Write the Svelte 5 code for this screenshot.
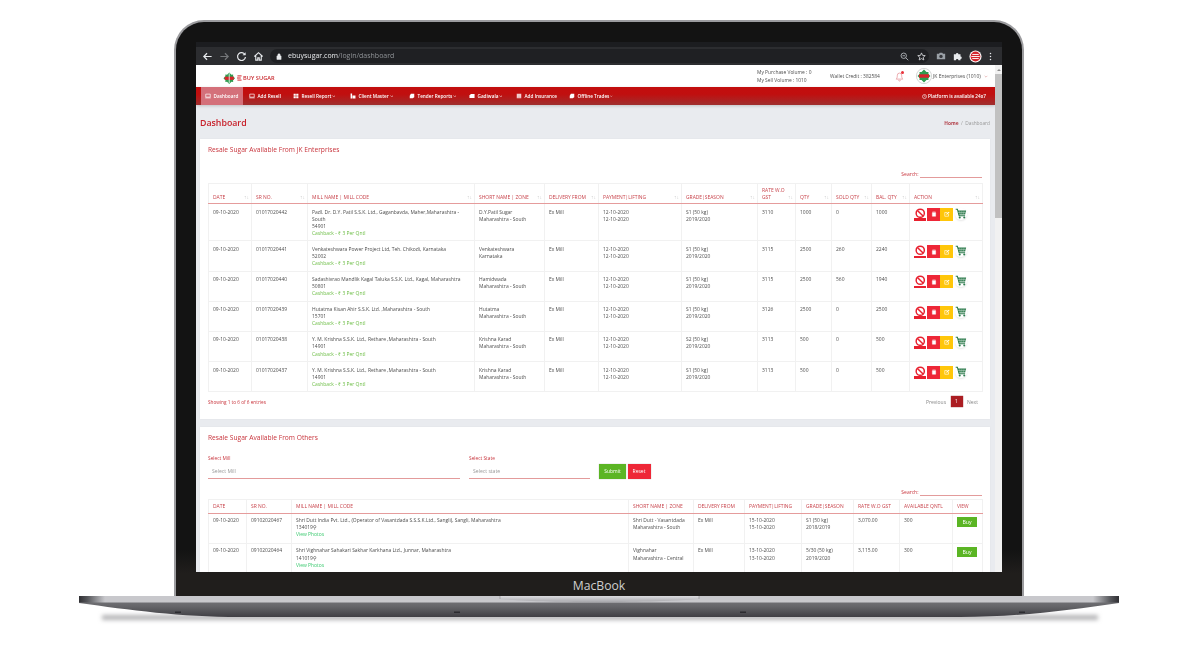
<script>
  const nav = [
    { label: 'Dashboard', icon: 'book', active: true },
    { label: 'Add Resell', icon: 'book' },
    { label: 'Resell Report', icon: 'grid', caret: true },
    { label: 'Client Master', icon: 'bars', caret: true },
    { label: 'Tender Reports', icon: 'doc', caret: true },
    { label: 'Gadiwala', icon: 'truck', caret: true },
    { label: 'Add Insurance', icon: 'list' },
    { label: 'Offline Trades', icon: 'doc', caret: true }
  ];

  const headA = ['DATE', 'SR NO.', 'MILL NAME | MILL CODE', 'SHORT NAME | ZONE', 'DELIVERY FROM', 'PAYMENT|LIFTING', 'GRADE|SEASON', 'RATE W.O GST', 'QTY', 'SOLD QTY', 'BAL. QTY', 'ACTION'];
  const colsA = [43, 56, 167, 70, 54, 83, 76, 38, 36, 40, 38, 73];
  const rowsA = [
    ['01017020442', 'Padl. Dr. D.Y. Patil S.S.K. Ltd., Gaganbavda, Maher,Maharashtra - South', '54901', 'D.Y.Patil Sugar', 'Maharashtra - South', 'S1 (50 kg)', '3110', '1000', '0', '1000'],
    ['01017020441', 'Venkateshwara Power Project Ltd, Teh. Chikodi, Karnataka', '52002', 'Venkateshwara', 'Karnataka', 'S1 (50 kg)', '3115', '2500', '260', '2240'],
    ['01017020440', 'Sadashivrao Mandlik Kagal Taluka S.S.K. Ltd., Kagal, Maharashtra', '50801', 'Hamidwada', 'Maharashtra - South', 'S1 (50 kg)', '3115', '2500', '560', '1940'],
    ['01017020439', 'Hutatma Kisan Ahir S.S.K. Ltd. ,Maharashtra - South', '15701', 'Hutatma', 'Maharashtra - South', 'S1 (50 kg)', '3126', '2500', '0', '2500'],
    ['01017020438', 'Y. M. Krishna S.S.K. Ltd., Rethare ,Maharashtra - South', '14901', 'Krishna Karad', 'Maharashtra - South', 'S2 (50 kg)', '3113', '500', '0', '500'],
    ['01017020437', 'Y. M. Krishna S.S.K. Ltd., Rethare ,Maharashtra - South', '14901', 'Krishna Karad', 'Maharashtra - South', 'S1 (50 kg)', '3113', '500', '0', '500']
  ];

  const headB = ['DATE', 'SR NO.', 'MILL NAME | MILL CODE', 'SHORT NAME | ZONE', 'DELIVERY FROM', 'PAYMENT|LIFTING', 'GRADE|SEASON', 'RATE W.O GST', 'AVAILABLE QNTL', 'VIEW'];
  const colsB = [38, 45, 337, 65, 51, 57, 52, 46, 53, 30];
  const rowsB = [
    ['09102020467', 'Shri Dutt India Pvt. Ltd., (Operator of Vasantdada S.S.S.K.Ltd., Sangli), Sangli, Maharashtra', '134019', 'Shri Dutt - Vasantdada', 'Maharashtra - South', '15-10-2020', 'S1 (50 kg)', '2018/2019', '3,070.00'],
    ['09102020464', 'Shri Vighnahar Sahakari Sakhar Karkhana Ltd., Junnar, Maharashtra', '141019', 'Vighnahar', 'Maharashtra - Central', '13-10-2020', '5/30 (50 kg)', '2019/2020', '3,115.00']
  ];
</script>

<div class="stage">
  <div class="lid">
    <div class="screen">
      <div class="tabstrip"></div>
      <div class="toolbar">
        <svg class="tb" viewBox="0 0 12 12"><path d="M10.5 6H2M5.5 2.5 2 6l3.500 3.500" fill="none" stroke="#e8eaed" stroke-width="1.300"/></svg>
        <svg class="tb" viewBox="0 0 12 12"><path d="M1.500 6H10M6.500 2.500 10 6 6.500 9.500" fill="none" stroke="#75777a" stroke-width="1.300"/></svg>
        <svg class="tb" viewBox="0 0 12 12"><path d="M9.800 4A4.300 4.300 0 1 0 10.300 6.500" fill="none" stroke="#e8eaed" stroke-width="1.300"/><path d="M10.500 1.300V4.700H7.100Z" fill="#e8eaed"/></svg>
        <svg class="tb" viewBox="0 0 12 12"><path d="M1.500 6 6 1.800 10.500 6M3 5v5h2.200V7.500h1.600V10H9V5" fill="none" stroke="#e8eaed" stroke-width="1.200"/></svg>
        <div class="omni">
          <svg class="lock" viewBox="0 0 8 10"><path d="M1 4.200h6v5H1zM2.300 4.200V2.800a1.700 1.700 0 0 1 3.400 0v1.400" fill="#e8eaed" stroke="#e8eaed" stroke-width=".7" fill-rule="evenodd"/></svg>
          <span class="url"><b>ebuysugar.com</b>/login/dashboard</span>
          <svg class="omi zoomi" viewBox="0 0 12 12"><circle cx="5" cy="5" r="3.600" fill="none" stroke="#bdc1c6" stroke-width="1.100"/><path d="M7.700 7.700 11 11M3.300 5h3.400" stroke="#bdc1c6" stroke-width="1.100"/></svg>
          <svg class="omi" viewBox="0 0 12 12"><path d="M6 1.200 7.400 4.500l3.600.3-2.700 2.300.8 3.500L6 8.800 2.900 10.600l.8-3.500L1 4.800l3.600-.3Z" fill="none" stroke="#dadce0" stroke-width="1.100"/></svg>
        </div>
        <div class="tb-right">
          <svg class="tb" viewBox="0 0 12 12"><path d="M1 3.200h2.600L4.500 2h3l.9 1.200H11V10H1Z" fill="#9aa0a6"/><circle cx="6" cy="6.500" r="2" fill="#35363a"/></svg>
          <svg class="tb" viewBox="0 0 12 12"><path d="M1 4h2.500a1.500 1.500 0 1 1 3 0H9v2.500a1.500 1.500 0 1 1 0 3V11H6.500a1.500 1.500 0 1 0-3 0H1Z" fill="#e8eaed"/></svg>
          <svg class="prof" viewBox="0 0 14 14"><circle cx="7" cy="7" r="6.500" fill="#fff"/><circle cx="7" cy="7" r="5.300" fill="#d3232b"/><path d="M3.500 4.800h7M2.500 7h9M3.500 9.200h7" stroke="#fff" stroke-width="1"/></svg>
          <svg class="dots" viewBox="0 0 4 12"><circle cx="2" cy="2" r="1" fill="#e8eaed"/><circle cx="2" cy="6" r="1" fill="#e8eaed"/><circle cx="2" cy="10" r="1" fill="#e8eaed"/></svg>
        </div>
      </div>

      <div class="viewport">
        <div class="page">
          <header class="top">
            <div class="logo">
              <svg class="tree" viewBox="0 0 16 16">
                <path d="M8 .6 10.800 3.400 13 3.300 12.900 5.500 15.400 8 12.900 10.500 13 12.700 10.800 12.600 8 15.400 5.200 12.600 3 12.700 3.100 10.500 .6 8 3.100 5.500 3 3.300 5.200 3.400Z" fill="#2f9b4f"/>
                <rect x="2.200" y="6" width="11.600" height="4" fill="#d8232a"/>
                <path d="M7.300 1.500h1.400v13H7.300z" fill="#fff" opacity=".7"/>
              </svg>
              <svg class="stripes" viewBox="0 0 6 7"><path d="M.5 1h5M0 3.500h4.500M.5 6h5" stroke="#d3232b" stroke-width="1.200"/></svg>
              <span>BUY SUGAR</span>
            </div>
            <div class="volumes"><div>My Purchase Volume : 0</div><div>My Sell Volume : 1010</div></div>
            <div class="wallet">Wallet Credit : 382584</div>
            <div class="bell">
              <svg viewBox="0 0 10 12"><path d="M5 2.200a2.400 2.400 0 0 0-2.400 2.400c0 2.400-.5 3.500-1.300 4.300h7.400c-.8-.8-1.300-1.900-1.300-4.300A2.400 2.400 0 0 0 5 2.200ZM4 10a1 1 0 0 0 2 0" fill="none" stroke="#e58a8f" stroke-width=".8"/></svg>
              <i class="dot"></i>
            </div>
            <svg class="avatar" viewBox="0 0 16 16">
              <circle cx="8" cy="8" r="7.600" fill="#fff" stroke="#bbb" stroke-width=".6"/>
              <path d="M8 1.500 10.500 4l2 .1-.1 2L14.500 8l-2.100 1.900.1 2-2 .1L8 14.500 5.500 12l-2-.1.1-2L1.500 8l2.100-1.900-.1-2 2-.1Z" fill="#2f9b4f"/>
              <rect x="3" y="6.300" width="10" height="3.400" fill="#d8232a"/>
            </svg>
            <div class="user">JK Enterprises (1010)</div>
            <svg class="ucaret" viewBox="0 0 6 4"><path d="M1 1l2 2 2-2" fill="none" stroke="#d98a8a" stroke-width=".8"/></svg>
          </header>

          <nav class="nav">
            <div class="nav-items">
              {#each nav as item}
                <div class="nav-item" class:active={item.active}>
                  <svg class="nav-ic" viewBox="0 0 8 8">
                    {#if item.icon === 'book'}
                      <path d="M1 1.500h6v4H1zM.3 6.500h7.400" fill="none" stroke="#fff" stroke-width=".9"/>
                    {:else if item.icon === 'grid'}
                      <path d="M.8 1h2.900v2.700H.8zM4.300 1h2.900v2.700H4.300zM.8 4.300h2.900V7H.8zM4.300 4.300h2.900V7H4.300z" fill="#fff"/>
                    {:else if item.icon === 'bars'}
                      <path d="M.8 .8h2v6.400h-2zM3.300 3.300h4v3.900h-4z" fill="#fff"/>
                    {:else if item.icon === 'doc'}
                      <path d="M2.500 1h4.500v4.500L5 7H1V3.500Z" fill="#fff"/>
                    {:else if item.icon === 'truck'}
                      <path d="M.6 6.500V3.200L2.600 1.400h4.800v5.100Z" fill="#fff"/>
                    {:else}
                      <path d="M1 1h6v6H1zM2 2.700h4M2 4.300h4M2 5.800h4" fill="#fff" stroke="#c0272d" stroke-width=".45"/>
                    {/if}
                  </svg>
                  <span>{item.label}</span>
                  {#if item.caret}
                    <svg class="nav-caret" viewBox="0 0 6 4"><path d="M.8 1 3 3 5.200 1" fill="none" stroke="#fff" stroke-width="1"/></svg>
                  {/if}
                </div>
              {/each}
            </div>
            <div class="platform">
              <svg class="clock" viewBox="0 0 8 8"><circle cx="4" cy="4" r="3.200" fill="none" stroke="#fff" stroke-width=".9"/><path d="M4 2v2.200h1.700" fill="none" stroke="#fff" stroke-width=".7"/></svg>
              Platform is available 24x7
            </div>
          </nav>

          <main class="main">
            <div class="crumbs">
              <h1>Dashboard</h1>
              <div class="bc"><b>Home</b><span class="slash">/</span><span>Dashboard</span></div>
            </div>

            <section class="card card-a">
              <h2>Resale Sugar Available From JK Enterprises</h2>
              <div class="search search-a"><label for="sa">Search:</label><input id="sa" /></div>
              <table>
                <colgroup>{#each colsA as c}<col width={c} />{/each}</colgroup>
                <thead>
                  <tr>
                    {#each headA as h}
                      <th><div class="th-in"><span>{h}</span><span class="sort">↑↓</span></div></th>
                    {/each}
                  </tr>
                </thead>
                <tbody>
                  {#each rowsA as r}
                    <tr>
                      <td>09-10-2020</td>
                      <td>{r[0]}</td>
                      <td>{r[1]}<br />{r[2]}<br /><span class="cash">Cashback - ₹ 3 Per Qntl</span></td>
                      <td>{r[3]}<br />{r[4]}</td>
                      <td>Ex Mill</td>
                      <td>12-10-2020<br />12-10-2020</td>
                      <td>{r[5]}<br />2019/2020</td>
                      <td>{r[6]}</td>
                      <td>{r[7]}</td>
                      <td>{r[8]}</td>
                      <td>{r[9]}</td>
                      <td class="act">
                        <div class="actions">
                          <div class="ban">
                            <svg viewBox="0 0 10 10"><circle cx="5" cy="5" r="3.900" fill="none" stroke="#e8202e" stroke-width="1.400"/><path d="M2.300 2.300 7.700 7.700" stroke="#e8202e" stroke-width="1.400"/></svg>
                            <i></i>
                          </div>
                          <div class="btn-del">
                            <svg viewBox="0 0 8 8"><path d="M1.800 2.400h4.400V7H1.800zM1.300 1.500h5.400M3.200 1.200h1.600" fill="#fff" stroke="#fff" stroke-width=".6"/></svg>
                          </div>
                          <div class="btn-edit">
                            <svg viewBox="0 0 8 8"><path d="M1 2h3.500M1 2v5h5V4" fill="none" stroke="#fff" stroke-width=".8"/><path d="M3 5l.3-1.200L6.300 1l1 1L4.200 4.800Z" fill="#fff"/></svg>
                          </div>
                          <div class="cart">
                            <svg viewBox="0 0 14 14"><path d="M.8 1.500h2l2 7.500h7" fill="none" stroke="#2b7a4b" stroke-width="1.200"/><path d="M3.300 3h9.700l-1.200 4.700H4.500Z" fill="#2b7a4b"/><path d="M5.500 3.300 6 7.500M8 3.300v4.200M10.500 3.300 10 7.500M3.800 5.200h8.600" stroke="#fff" stroke-width=".4"/><circle cx="5.500" cy="11" r="1.200" fill="#2b7a4b"/><circle cx="10.800" cy="11" r="1.200" fill="#2b7a4b"/></svg>
                          </div>
                        </div>
                      </td>
                    </tr>
                  {/each}
                </tbody>
              </table>
              <div class="foot">
                <div class="showing">Showing 1 to 6 of 6 entries</div>
                <div class="pager"><span>Previous</span><b>1</b><span>Next</span></div>
              </div>
            </section>

            <section class="card card-b">
              <h2>Resale Sugar Available From Others</h2>
              <div class="filters">
                <div class="field mill"><label for="fm">Select Mill</label><div id="fm" class="sel">Select Mill</div></div>
                <div class="field state"><label for="fs">Select State</label><div id="fs" class="sel">Select state</div></div>
                <button class="submit">Submit</button>
                <button class="reset">Reset</button>
              </div>
              <div class="search search-b"><label for="sb">Search:</label><input id="sb" /></div>
              <table class="tb-b">
                <colgroup>{#each colsB as c}<col width={c} />{/each}</colgroup>
                <thead><tr>{#each headB as h}<th>{h}</th>{/each}</tr></thead>
                <tbody>
                  {#each rowsB as r}
                    <tr>
                      <td>09-10-2020</td>
                      <td>{r[0]}</td>
                      <td>{r[1]}<br />{r[2]}<span class="pin">⚲</span><br /><span class="photos">View Photos</span></td>
                      <td>{r[3]}<br />{r[4]}</td>
                      <td>Ex Mill</td>
                      <td>{r[5]}<br />{r[5]}</td>
                      <td>{r[6]}<br />{r[7]}</td>
                      <td>{r[8]}</td>
                      <td>300</td>
                      <td><button class="buy">Buy</button></td>
                    </tr>
                  {/each}
                </tbody>
              </table>
            </section>
          </main>
        </div>
        <div class="scrollbar"><span class="arrow"></span><div class="thumb"></div></div>
      </div>
    </div>
    <div class="brand">MacBook</div>
  </div>

  <svg class="base" viewBox="0 0 1060 36">
    <defs>
      <linearGradient id="bd" x1="0" y1="0" x2="0" y2="1">
        <stop offset="0" stop-color="#7d7d81"/><stop offset=".5" stop-color="#636367"/><stop offset="1" stop-color="#403f44"/>
      </linearGradient>
      <linearGradient id="st" x1="0" y1="0" x2="1" y2="0">
        <stop offset="0" stop-color="#2f2f33"/><stop offset=".008" stop-color="#55565a"/><stop offset=".025" stop-color="#c8c8cc"/>
        <stop offset=".975" stop-color="#c8c8cc"/><stop offset=".992" stop-color="#55565a"/><stop offset="1" stop-color="#2f2f33"/>
      </linearGradient>
      <linearGradient id="nt" x1="0" y1="0" x2="0" y2="1">
        <stop offset="0" stop-color="#dcdce0"/><stop offset="1" stop-color="#a8a8ac"/>
      </linearGradient>
      <filter id="sh" x="-5%" y="-100%" width="110%" height="300%"><feGaussianBlur stdDeviation="2"/></filter>
    </defs>
    <rect x="32" y="19" width="996" height="5" fill="#b4b4b6" filter="url(#sh)"/>
    <path d="M9 1H1049V7C1000 14 950 21 890 21H170C110 21 60 14 9 7Z" fill="url(#bd)"/>
    <rect x="9" y="0" width="1040" height="6.500" fill="url(#st)"/>
    <path d="M430 0H629V3C590 7 470 7 430 3Z" fill="url(#nt)"/>
    <path d="M430 0V3M629 0V3" stroke="#8e8e92" stroke-width=".6"/>
    <g fill="#2c2c30"><rect x="105" y="15.500" width="6" height="1.500"/><rect x="384" y="15.500" width="6" height="1.500"/><rect x="670" y="15.500" width="6" height="1.500"/><rect x="949" y="15.500" width="6" height="1.500"/></g>
  </svg>
</div>

<style>
  :global(body) { margin: 0; background: #fff; }
  * { box-sizing: border-box; }
  .stage {
    width: 1200px; height: 649px; background: #fff; overflow: hidden;
    display: flex; flex-direction: column; align-items: center; padding: 20px 2px 0 0;
    font-family: "Open Sans", sans-serif;
  }
  .lid {
    width: 850px; height: 576px; flex: none;
    background: linear-gradient(#131313, #131313 92%, #201e1c 96%);
    border: 2px solid #9c9c9f; border-bottom: none;
    border-radius: 30px 30px 0 0;
    padding: 20px 20px 0 20px;
    display: flex; flex-direction: column;
  }
  .screen {
    width: 806px; height: 530px; flex: none; overflow: hidden; background: #fff;
    display: flex; flex-direction: column; filter: blur(.3px);
  }
  .brand { height: 24px; flex: none; text-align: center; color: #cfcfcf; font-size: 12.200px; line-height: 28px; }

  .tabstrip { height: 5px; background: #1c1d20; flex: none; }
  .toolbar {
    height: 18px; flex: none; background: #2c2d30; display: flex; align-items: center;
    padding-left: 6px; gap: 6px;
  }
  .tb { width: 11px; height: 11px; flex: none; }
  .omni {
    width: 659px; height: 14px; border-radius: 7px; background: #1f2023;
    display: flex; align-items: center; padding: 0 3px 0 6px; flex: none;
  }
  .lock { width: 6px; height: 7px; flex: none; }
  .url { margin-left: 6px; font-size: 7px; color: #8f9296; line-height: 14px; }
  .url b { font-weight: 400; color: #e8eaed; }
  .omi { width: 9px; height: 9px; flex: none; margin-left: 8px; }
  .zoomi { margin-left: auto; }
  .tb-right { display: flex; align-items: center; gap: 6.500px; margin-left: 1px; }
  .tb-right .tb { width: 10px; height: 10px; }
  .prof { width: 13px; height: 13px; }
  .dots { width: 3px; height: 9px; }

  .viewport { flex: 1; min-height: 0; display: flex; }
  .page { width: 799px; flex: none; background: #e9ebef; display: flex; flex-direction: column; overflow: hidden; }
  .scrollbar { flex: 1; background: #f1f1f1; display: flex; flex-direction: column; align-items: center; }
  .arrow { width: 0; height: 0; border: 2px solid transparent; border-bottom: 2.500px solid #8a8a8a; margin-top: 2px; }
  .thumb { width: 100%; height: 144px; background: #c1c1c1; margin-top: 3px; }

  .top {
    height: 22px; flex: none; background: #fff; display: flex; align-items: center;
    font-size: 4.900px; color: #4d4d4d; line-height: 8px;
  }
  .logo { display: flex; align-items: center; margin: 4px 0 0 26.500px; width: 534.500px; color: #c8262c; font-size: 5.600px; font-weight: 600; letter-spacing: .05px; }
  .tree { width: 12.500px; height: 12.500px; margin-right: 2px; }
  .stripes { width: 5px; height: 6px; margin-right: 1px; }
  .volumes { width: 73px; }
  .wallet { width: 65px; }
  .bell { width: 15px; height: 11px; position: relative; }
  .bell svg { width: 9px; height: 11px; }
  .dot { position: absolute; left: 5.500px; top: 0; width: 3px; height: 3px; border-radius: 50%; background: #e8303a; }
  .avatar { width: 16px; height: 16px; margin-left: 6px; flex: none; }
  .user { margin-left: 1px; width: 50px; white-space: nowrap; font-size: 5px; }
  .ucaret { width: 4px; height: 3px; margin-left: 1px; }

  .nav {
    height: 18px; flex: none; color: #fff; display: flex; align-items: stretch;
    background: linear-gradient(#c30d0d 0, #c00f0f 40%, #9f2f2f 100%);
    box-shadow: 0 1px 3px rgba(0,0,0,.18); font-size: 4.700px; font-weight: 600;
    padding-left: 5px; white-space: nowrap; position: relative;
  }
  .nav-items { display: grid; grid-template-columns: 42px 44px 57px 59px 60px 47px 53px 50px; }
  .nav-item { display: flex; align-items: center; padding-left: 5.500px; }
  .nav-item.active { background: #d4707a; padding-left: 3.500px; }
  .nav-ic { width: 6px; height: 6px; margin-right: 3px; flex: none; }
  .nav-caret { width: 3.500px; height: 2.500px; margin-left: 1px; }
  .platform { margin-left: auto; padding-right: 9px; display: flex; align-items: center; gap: 1px; }
  .clock { width: 5px; height: 5px; }

  .main { padding: 0 5px 0 4px; flex: 1; min-height: 0; }
  .crumbs { height: 34px; display: flex; justify-content: space-between; align-items: center; padding: 2px 0 0 0; }
  h1 { margin: 0; font-size: 8.800px; font-weight: 600; color: #c8202a; }
  .bc { font-size: 4.800px; color: #999; display: flex; gap: 2.500px; }
  .bc b { color: #b3434c; font-weight: 700; }

  .card { background: #fff; padding: 0 8px; margin-bottom: 8px; box-shadow: 0 0 2px rgba(0,0,0,.04); }
  .card-a { height: 280px; }
  h2 { margin: 0; font-size: 6.650px; font-weight: 400; color: #c8343c; line-height: 9px; padding-top: 5.500px; }
  .search { display: flex; justify-content: flex-end; align-items: flex-end; font-size: 5px; color: #c8343c; }
  .search label { margin-right: 1.500px; line-height: 7px; }
  .search input { width: 62px; height: 7px; border: none; border-bottom: 1px solid #e39b9b; outline: none; padding: 0; background: transparent; }
  .search-a { margin-top: 15px; height: 9px; margin-bottom: 5px; }
  .search-b { height: 8px; margin-top: 9px; margin-bottom: 3px; }

  table { border-collapse: collapse; table-layout: fixed; width: 774px; font-size: 4.950px; line-height: 7.100px; color: #4d4d4d; }
  th, td { border: 1px solid #f1f1f1; padding: 4.400px 4px 3.500px; text-align: left; vertical-align: top; }
  th { color: #c8434b; font-weight: 400; vertical-align: bottom; border-bottom: 1px solid #e59c9c; padding: 3px 4px 2.500px; }
  .tb-b td { padding-top: 3.800px; padding-bottom: 4.100px; }
  .th-in { display: flex; justify-content: space-between; align-items: flex-end; }
  .sort { color: #ccc; font-size: 5px; flex: none; margin-right: -2px; }
  thead tr { height: 20px; }
  .tb-b thead tr { height: 14px; }
  .cash { color: #6cbd45; }
  .photos { color: #39c96e; }
  .pin { font-size: 4.500px; color: #333; }
  td.act { padding: 3.800px 0 0 4px; }
  .actions { display: flex; align-items: flex-start; }
  .ban { width: 12.500px; height: 13px; flex: none; display: flex; flex-direction: column; align-items: center; }
  .ban svg { width: 10.500px; height: 10.500px; flex: none; }
  .ban i { display: block; width: 12px; height: 2.500px; background: #e8202e; }
  .btn-del, .btn-edit { width: 13px; height: 13px; flex: none; display: flex; align-items: center; justify-content: center; }
  .btn-del { background: #ee2737; margin-left: .500px; }
  .btn-edit { background: #ffc60a; }
  .btn-del svg, .btn-edit svg { width: 6px; height: 6px; }
  .cart { width: 12px; height: 12px; margin-left: 2px; flex: none; border-radius: 50%; box-shadow: 0 1px 2px rgba(0,0,0,.1); }
  .cart svg { width: 12px; height: 12px; display: block; }

  .foot { display: flex; justify-content: space-between; align-items: center; height: 11px; margin-top: 4px; }
  .showing { color: #c8343c; font-size: 4.700px; }
  .pager { display: flex; align-items: center; font-size: 5px; color: #888; padding-right: 4px; }
  .pager b { width: 12px; height: 11px; background: #ab1d22; color: #fff; font-weight: 400; text-align: center; line-height: 11px; margin: 0 4.500px; box-shadow: 0 0 1px #7b1116; }

  .filters { display: flex; align-items: flex-end; margin-top: 13px; font-size: 5px; }
  .field label { display: block; color: #c8343c; font-size: 4.800px; line-height: 7px; }
  .sel { height: 17px; border-bottom: 1px solid #e39b9b; color: #999; padding-left: 4px; line-height: 18px; font-size: 5.100px; }
  .mill { width: 252px; margin-right: 9px; }
  .state { width: 121px; margin-right: 9px; }
  button { border: none; color: #fff; font-family: inherit; font-size: 5px; padding: 0; }
  .submit { width: 27px; height: 15px; background: #5bb524; margin-right: 1.500px; box-shadow: 0 0 1px rgba(0,0,0,.3); }
  .reset { width: 23px; height: 15px; background: #ee2737; box-shadow: 0 0 1px rgba(0,0,0,.3); }
  .buy { display: block; width: 20px; height: 10px; background: #5bb524; font-size: 5.200px; margin-top: -.500px; }
  .base { width: 1060px; height: 36px; flex: none; display: block; margin-left: 2px; }
</style>
